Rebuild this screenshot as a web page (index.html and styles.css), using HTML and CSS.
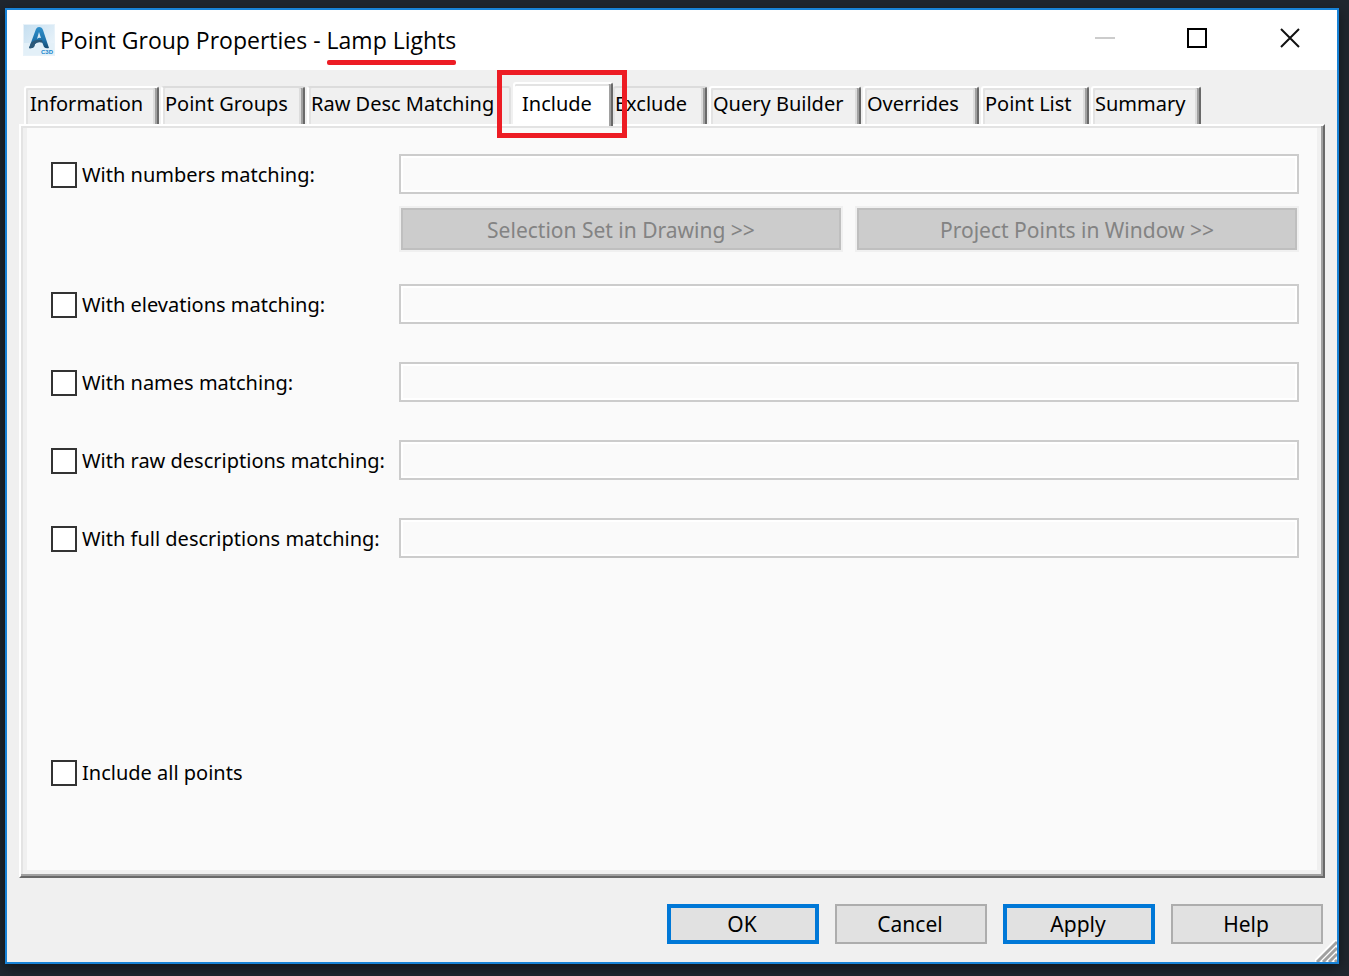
FILE: index.html
```html
<!DOCTYPE html>
<html lang="en">
<head>
<meta charset="utf-8">
<title>Point Group Properties - Lamp Lights</title>
<link rel="stylesheet" href="styles.css">
</head>
<body>
<main class="window">
  <header class="titlebar">
    <svg class="app-icon" viewBox="0 0 32 32" aria-hidden="true">
      <defs>
        <linearGradient id="tile" x1="0" y1="0" x2="1" y2="1"><stop offset="0" stop-color="#c6dff0"/><stop offset="1" stop-color="#f0f7fc"/></linearGradient>
        <linearGradient id="letter" x1="0" y1="0" x2="0" y2="1"><stop offset="0" stop-color="#2f8fca"/><stop offset="0.6" stop-color="#1f74ad"/><stop offset="1" stop-color="#174a70"/></linearGradient>
      </defs>
      <rect width="32" height="32" fill="#e8f2f9"/>
      <rect x="1" y="1" width="30" height="30" fill="url(#tile)"/>
      <path d="M1 19H31V31H1Z" fill="#e3f0f8"/>
      <path fill-rule="evenodd" d="M6 24L13 5Q14 3 16 3Q19 3 20 6L26 24Q23 25 21 23L19 18Q15 17 12 20L11 23Q8 25 6 24ZM14 15Q16 13 18 14L16 8Z" fill="url(#letter)"/>
      <path d="M6 24L8 19Q12 15 19 16L20 19Q15 17 12 20L11 23Q8 25 6 24Z" fill="#2b5878"/>
      <text class="icon-text" x="18" y="30">C3D</text>
    </svg>
    <h1 class="title">Point Group Properties - <span class="group-name">Lamp Lights</span></h1>
    <div class="controls">
      <button class="control" type="button" aria-label="Minimize" disabled><svg viewBox="0 0 20 20"><path d="M0 10H20" stroke="#ccc"/></svg></button>
      <button class="control" type="button" aria-label="Maximize"><svg viewBox="0 0 20 20"><path d="M1 1H19V19H1Z" fill="none" stroke="#000"/></svg></button>
      <button class="control" type="button" aria-label="Close"><svg viewBox="0 0 20 20"><path d="M1 1L19 19M19 1L1 19" stroke="#111"/></svg></button>
    </div>
  </header>
  <div class="content">
    <div class="tabs" role="tablist">
      <button class="tab" type="button" role="tab">Information</button>
      <button class="tab tab-flat" type="button" role="tab">Point Groups</button>
      <button class="tab tab-flat tab-before" type="button" role="tab">Raw Desc Matching</button>
      <button class="tab tab-active" type="button" role="tab" aria-selected="true">Include<span class="highlight"></span></button>
      <button class="tab tab-flat tab-after" type="button" role="tab">Exclude</button>
      <button class="tab" type="button" role="tab">Query Builder</button>
      <button class="tab" type="button" role="tab">Overrides</button>
      <button class="tab" type="button" role="tab">Point List</button>
      <button class="tab" type="button" role="tab">Summary</button>
    </div>
    <section class="panel" role="tabpanel" aria-label="Include">
      <form class="page">
        <div class="row">
          <label class="check"><input type="checkbox">With numbers matching:</label>
          <div class="fields">
            <input class="field" type="text" aria-label="Numbers" disabled>
            <div class="pickers">
              <button class="picker" type="button" disabled>Selection Set in Drawing &gt;&gt;</button>
              <button class="picker" type="button" disabled>Project Points in Window &gt;&gt;</button>
            </div>
          </div>
        </div>
        <div class="row">
          <label class="check"><input type="checkbox">With elevations matching:</label>
          <input class="field" type="text" aria-label="Elevations" disabled>
        </div>
        <div class="row">
          <label class="check"><input type="checkbox">With names matching:</label>
          <input class="field" type="text" aria-label="Names" disabled>
        </div>
        <div class="row">
          <label class="check"><input type="checkbox">With raw descriptions matching:</label>
          <input class="field" type="text" aria-label="Raw descriptions" disabled>
        </div>
        <div class="row">
          <label class="check"><input type="checkbox">With full descriptions matching:</label>
          <input class="field" type="text" aria-label="Full descriptions" disabled>
        </div>
        <label class="check check-all"><input type="checkbox">Include all points</label>
      </form>
    </section>
  </div>
  <footer class="actions">
    <button class="action action-primary" type="button">OK</button>
    <button class="action" type="button">Cancel</button>
    <button class="action action-primary" type="button">Apply</button>
    <button class="action" type="button">Help</button>
  </footer>
  <svg class="grip" viewBox="0 0 22 22" aria-hidden="true">
    <path d="M0 22L22 0M6 22L22 6M12 22L22 12M18 22L22 18" stroke="#fff" stroke-width="4"/>
    <path d="M2 22L22 2M8 22L22 8M14 22L22 14M20 22L22 20" stroke="#a0a0a0" stroke-width="3"/>
  </svg>
</main>
</body>
</html>
```
FILE: styles.css
```css
* { box-sizing: border-box; }

body {
  margin: 0;
  min-height: 100vh;
  padding: 8px 10px 12px 5px;
  display: flex;
  background: #20272f;
  color: #000;
  font: 20px/28px "Noto Sans", sans-serif;
}

button, input { font: inherit; color: inherit; margin: 0; }

.window {
  position: relative;
  flex: 1;
  display: flex;
  flex-direction: column;
  background: #f0f0f0;
  border: 2px solid #1883d7;
  box-shadow: 0 4px 12px #10151b;
}

.titlebar {
  display: flex;
  align-items: center;
  height: 60px;
  padding-left: 16px;
  background: #fff;
}

.app-icon { width: 32px; height: 32px; }
.icon-text { font: bold 6px "Liberation Sans", sans-serif; fill: #1484cc; }

.title {
  margin: 0 0 0 5px;
  font: 23px/32px "Open Sans", sans-serif;
  white-space: nowrap;
}

.group-name { position: relative; display: inline-block; }
.group-name::after {
  content: "";
  position: absolute;
  left: 0;
  right: 0;
  bottom: -9px;
  height: 5px;
  border-radius: 2px;
  background: #ed1c24;
}

.controls { display: flex; align-self: flex-start; margin-left: auto; }
.control {
  width: 92px;
  height: 56px;
  padding: 0;
  border: 0;
  background: none;
}
.control:last-child { width: 94px; }
.control svg { display: block; margin: auto; width: 20px; height: 20px; stroke-width: 2; }

.content {
  flex: 1;
  display: flex;
  flex-direction: column;
  padding: 16px 12px 0;
}

.tabs {
  display: grid;
  grid-template-columns: 135px 144px 204px 100px 92px 152px 116px 108px 110px;
  column-gap: 2px;
  padding-left: 5px;
  height: 38px;
}

.tab {
  position: relative;
  padding: 0 0 4px 2px;
  border: solid #fff;
  border-width: 2px 2px 0;
  border-right-color: #696969;
  border-radius: 3px 3px 0 0;
  background: #f0f0f0;
  box-shadow: inset -2px 0 #a0a0a0, inset -4px 0 #dcdcdc, inset 2px 2px #e3e3e3;
  text-align: left;
  white-space: nowrap;
}
.tab:first-child { padding-left: 4px; }
.tab-flat { border-top-color: #dcdcdc; box-shadow: inset -2px 0 #a0a0a0, inset -4px 0 #dcdcdc, inset 2px 0 #e3e3e3; }
.tab-before { border-right-color: #e0e0e0; box-shadow: inset 2px 0 #e3e3e3; }
.tab-active {
  z-index: 1;
  margin: -4px 0 -2px;
  padding: 0 0 2px 7px;
  background: #fff;
  box-shadow: inset -2px 0 #a0a0a0, inset 0 2px #e3e3e3;
}
.tab-after { margin-left: -2px; border-left: 0; }

.highlight {
  position: absolute;
  inset: -14px -16px -12px -18px;
  border: 5px solid #ed1c24;
}

.panel {
  flex: 1;
  display: flex;
  border: 2px solid #696969;
  border-top-color: #fff;
  border-left-color: #fff;
  padding: 2px 6px 6px;
  background: #f0f0f0;
  box-shadow: inset -2px -2px #a0a0a0, inset 2px 2px #e3e3e3;
}

.page {
  flex: 1;
  display: flex;
  flex-direction: column;
  gap: 38px;
  padding: 26px 18px 26px 24px;
  background: #fafafa;
}

.row {
  display: grid;
  grid-template-columns: 348px 1fr;
  align-items: start;
}
.row:first-child { margin-bottom: -6px; }

.check {
  display: flex;
  align-items: center;
  gap: 5px;
  height: 42px;
  margin-bottom: -2px;
  line-height: 30px;
  white-space: nowrap;
}
.check input {
  appearance: none;
  flex: none;
  width: 26px;
  height: 26px;
  border: 2px solid #333;
  background: #fff;
}
.check-all { margin-top: 156px; }

.fields { display: grid; gap: 12px; }
.field {
  width: 100%;
  height: 40px;
  padding: 0 8px;
  border: 2px solid #ccc;
  background: #fafafa;
  box-shadow: inset 0 0 0 2px #fff;
}

.pickers { display: grid; grid-template-columns: 1fr 1fr; gap: 16px; padding: 2px; }
.picker {
  height: 42px;
  padding: 2px 0 0;
  border: 2px solid #bfbfbf;
  background: #ccc;
  box-shadow: 0 0 0 2px #f0f0f0;
  color: #838383;
  font-size: 21px;
}

.actions {
  display: flex;
  justify-content: flex-end;
  gap: 16px;
  padding: 26px 14px 18px;
}
.action {
  width: 152px;
  height: 40px;
  padding: 0 2px 0 0;
  border: 2px solid #adadad;
  background: #e1e1e1;
  font-size: 21px;
}
.action-primary { border: 4px solid #0078d7; }

.grip {
  position: absolute;
  right: 0;
  bottom: 0;
  width: 22px;
  height: 22px;
}
```
